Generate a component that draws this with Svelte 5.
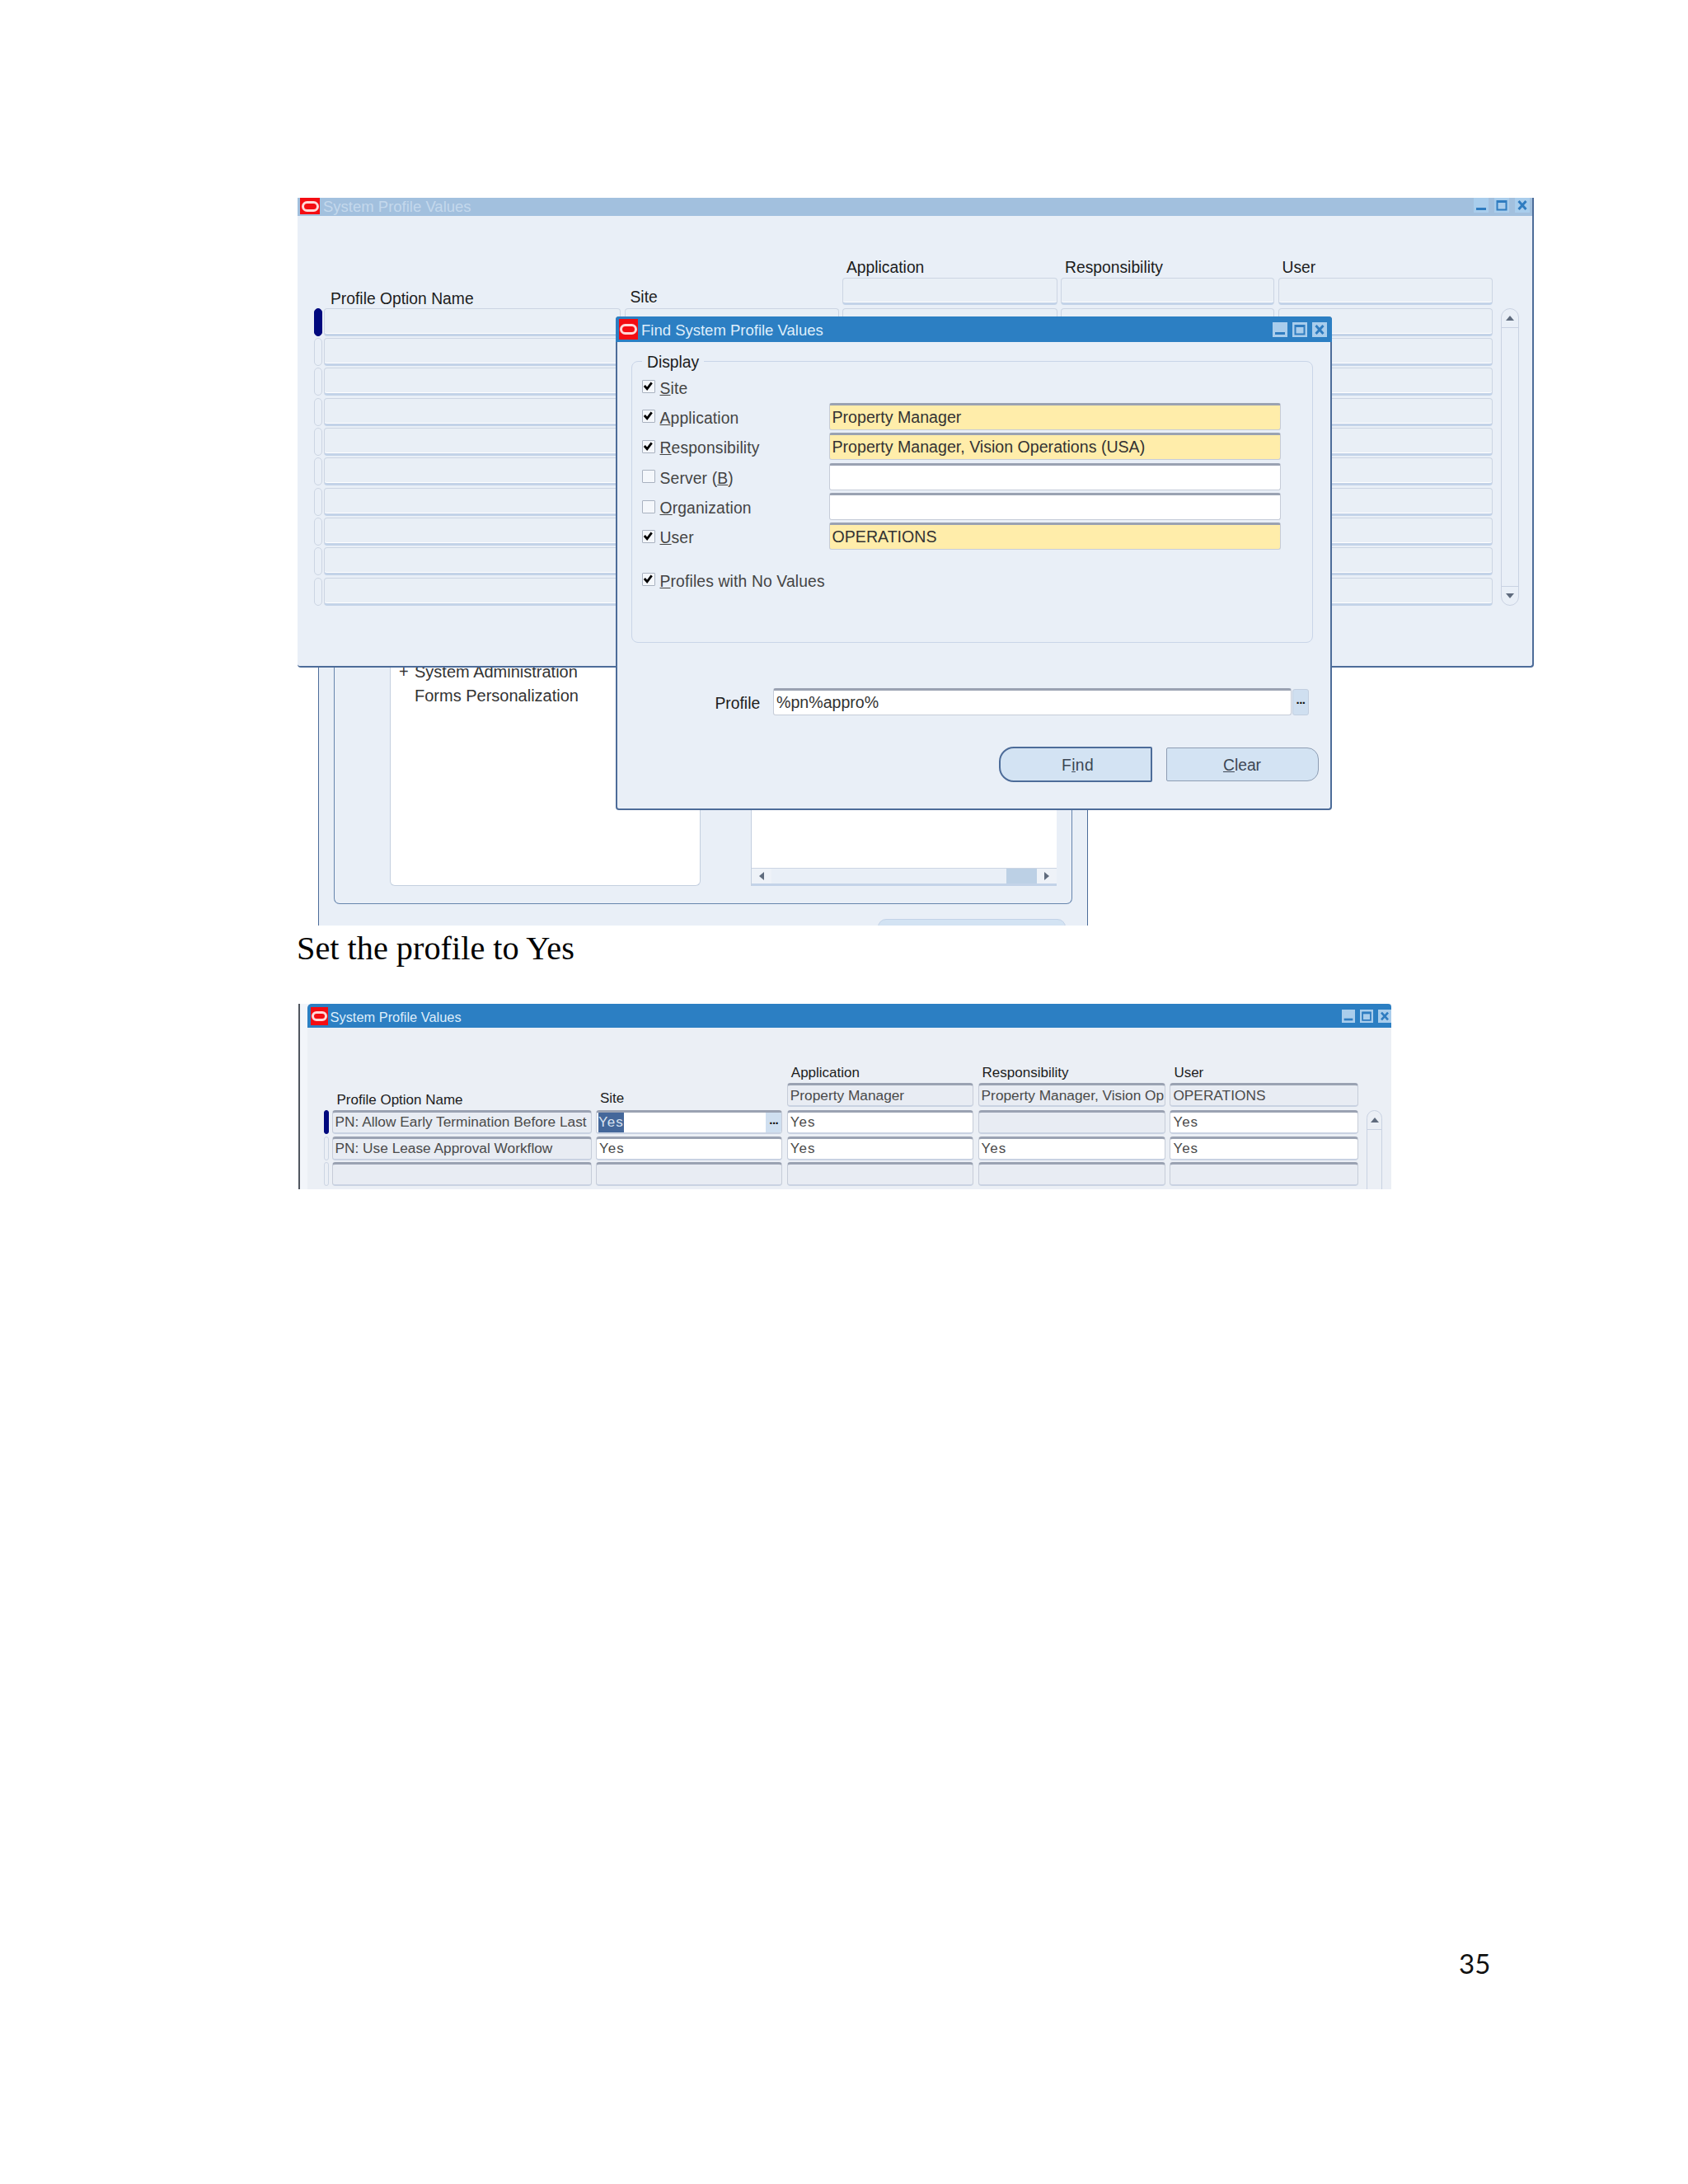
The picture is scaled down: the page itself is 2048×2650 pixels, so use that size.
<script>
    // rows of the empty table behind the find dialog
    const blankRows = Array.from({ length: 10 }, (_, i) => i);

    const findRows = [
        { key: "site", pre: "", mn: "S", post: "ite", checked: true },
        { key: "app", pre: "", mn: "A", post: "pplication", checked: true, value: "Property Manager", req: true },
        { key: "resp", pre: "", mn: "R", post: "esponsibility", checked: true, value: "Property Manager, Vision Operations (USA)", req: true },
        { key: "server", pre: "Server (", mn: "B", post: ")", checked: false, value: "" },
        { key: "org", pre: "", mn: "O", post: "rganization", checked: false, value: "" },
        { key: "user", pre: "", mn: "U", post: "ser", checked: true, value: "OPERATIONS", req: true },
    ];

    const results = [
        { name: "PN: Allow Early Termination Before Last", site: "Yes", app: "Yes", resp: "", user: "Yes", current: true },
        { name: "PN: Use Lease Approval Workflow", site: "Yes", app: "Yes", resp: "Yes", user: "Yes" },
        { name: "", site: "", app: "", resp: "", user: "" },
    ];
</script>

{#snippet winButtons()}
    <div class="winbtns">
        <svg viewBox="0 0 18 18"><rect width="18" height="18" fill="#a9cdec" /><rect x="3" y="12" width="12" height="3" fill="#2f7cc0" /></svg>
        <svg viewBox="0 0 18 18"><rect width="18" height="18" fill="#a9cdec" /><rect x="3.5" y="4" width="11" height="10.5" fill="none" stroke="#2f7cc0" stroke-width="2" /><rect x="3" y="3" width="12" height="3" fill="#2f7cc0" /></svg>
        <svg viewBox="0 0 18 18"><rect width="18" height="18" fill="#a9cdec" /><path d="M4.5 4 L13.5 14 M13.5 4 L4.5 14" stroke="#2f7cc0" stroke-width="3" /></svg>
    </div>
{/snippet}

{#snippet check(on)}
    <span class="box">
        {#if on}
            <svg viewBox="0 0 14 14"><path d="M2 6.5 L5.5 10.5 L11.5 2.5" fill="none" stroke="#000" stroke-width="3" /></svg>
        {/if}
    </span>
{/snippet}

{#snippet scrollbar()}
    <div class="scroll">
        <div class="cap up"><i class="tri-up"></i></div>
        <div class="cap down"><i class="tri-down"></i></div>
    </div>
{/snippet}

<div class="page">
    <div class="figure">
        <!-- navigator form, mostly hidden under the other two windows -->
        <div class="behind">
            <div class="frame">
                <div class="tree">
                    <div class="tree-row top"><span class="plus">+</span>System Administration</div>
                    <div class="tree-row">Forms Personalization</div>
                </div>
                <div class="list">
                    <div class="hbar">
                        <div class="harrow"><i class="tri-left"></i></div>
                        <div class="htrack"></div>
                        <div class="hthumb"></div>
                        <div class="harrow"><i class="tri-right"></i></div>
                    </div>
                </div>
            </div>
            <div class="btn-peek"></div>
        </div>

        <!-- inactive window -->
        <div class="window main">
            <div class="title pale">
                <span class="logo small"></span>
                <span class="title-text">System Profile Values</span>
                {@render winButtons()}
            </div>
            <div class="tbl big">
                <div class="lab c-app">Application</div>
                <div class="lab c-resp">Responsibility</div>
                <div class="lab c-user">User</div>

                <div class="lab low c-name">Profile Option Name</div>
                <div class="lab low site-lab c-site">Site</div>
                <div class="fld ctx c-app"></div>
                <div class="fld ctx c-resp"></div>
                <div class="fld ctx c-user"></div>

                {#each blankRows as i}
                    <div class="ind c-ind" class:on={i === 0} style="grid-row: {i + 3}"></div>
                    <div class="fld c-name" style="grid-row: {i + 3}"></div>
                    <div class="fld c-site" style="grid-row: {i + 3}"></div>
                    <div class="fld c-app" style="grid-row: {i + 3}"></div>
                    <div class="fld c-resp" style="grid-row: {i + 3}"></div>
                    <div class="fld c-user" style="grid-row: {i + 3}"></div>
                {/each}
                <div class="c-scroll">{@render scrollbar()}</div>
            </div>
        </div>

        <!-- find dialog -->
        <div class="dialog">
            <div class="title blue">
                <span class="logo"></span>
                <span class="title-text">Find System Profile Values</span>
                {@render winButtons()}
            </div>
            <div class="dialog-body">
                <fieldset>
                    <legend>Display</legend>
                    <div class="find-grid">
                        {#each findRows as r}
                            {@render check(r.checked)}
                            <span class="chk-label">{r.pre}<u>{r.mn}</u>{r.post}</span>
                            {#if r.value !== undefined}
                                <div class="input" class:req={r.req}>{r.value}</div>
                            {:else}
                                <span></span>
                            {/if}
                        {/each}
                    </div>
                    <div class="novalues">
                        {@render check(true)}
                        <span class="chk-label"><u>P</u>rofiles with No Values</span>
                    </div>
                </fieldset>

                <div class="profile">
                    <span class="profile-label">Profile</span>
                    <div class="input profile-input">%pn%appro%</div>
                    <div class="lov"><b>...</b></div>
                </div>

                <div class="actions">
                    <button class="find">F<u>i</u>nd</button>
                    <button class="clear"><u>C</u>lear</button>
                </div>
            </div>
        </div>
    </div>

    <p class="caption">Set the profile to Yes</p>

    <div class="shot2">
        <div class="window second">
            <div class="title blue thin">
                <span class="logo tiny"></span>
                <span class="title-text">System Profile Values</span>
                {@render winButtons()}
            </div>
            <div class="tbl tight">
                <div class="lab c-app">Application</div>
                <div class="lab c-resp">Responsibility</div>
                <div class="lab c-user">User</div>

                <div class="lab low c-name">Profile Option Name</div>
                <div class="lab low site-lab c-site">Site</div>
                <div class="fld ctx ro c-app">Property Manager</div>
                <div class="fld ctx ro c-resp">Property Manager, Vision Op</div>
                <div class="fld ctx ro c-user">OPERATIONS</div>

                {#each results as r, i}
                    <div class="ind c-ind" class:on={r.current} style="grid-row: {i + 3}"></div>
                    <div class="fld ro c-name" style="grid-row: {i + 3}">{r.name}</div>
                    {#if r.current}
                        <div class="fld wh spaced c-site site-cell" style="grid-row: {i + 3}">
                            <span class="sel">{r.site}</span>
                            <div class="lov"><b>...</b></div>
                        </div>
                    {:else}
                        <div class="fld spaced c-site" class:wh={r.site} class:ro={!r.site} style="grid-row: {i + 3}">{r.site}</div>
                    {/if}
                    <div class="fld spaced c-app" class:wh={r.app} class:ro={!r.app} style="grid-row: {i + 3}">{r.app}</div>
                    <div class="fld spaced c-resp" class:wh={r.resp} class:ro={!r.resp} style="grid-row: {i + 3}">{r.resp}</div>
                    <div class="fld spaced c-user" class:wh={r.user} class:ro={!r.user} style="grid-row: {i + 3}">{r.user}</div>
                {/each}
                <div class="c-scroll">{@render scrollbar()}</div>
            </div>
        </div>
    </div>

    <div class="pageno">35</div>
</div>

<style>
    :global(body) {
        margin: 0;
        background: #fff;
    }

    .page {
        width: 2048px;
        min-height: 2650px;
        box-sizing: border-box;
        padding: 240px 0 0 361px;
        font-family: "Liberation Sans", Arial, sans-serif;
        font-size: 19.3px;
        color: #222;
    }

    .figure {
        position: relative;
        height: 883px;
        width: 1500px;
    }

    /* ---- window chrome ---- */
    .window {
        box-sizing: border-box;
        background: #e9eff7;
    }

    .window.main {
        position: relative;
        z-index: 1;
        height: 570px;
        border-right: 2px solid #4d6c99;
        border-bottom: 2px solid #4d6c99;
        border-radius: 0 0 4px 4px;
    }

    .title {
        display: flex;
        align-items: center;
        color: #dfeefb;
    }

    .title.pale {
        height: 22px;
        background: #a2c0de;
        align-items: flex-start;
        color: #c4d8ec;
    }

    .title.pale .title-text {
        font-size: 18.5px;
        line-height: 17px;
        margin-left: 4px;
    }

    .title.pale .winbtns {
        margin-right: 3px;
        gap: 7px;
    }

    .title.blue {
        height: 31px;
        background: #2c7fc3;
        border-radius: 4px 4px 0 0;
    }

    .title.thin {
        height: 29px;
    }

    .title-text {
        font-size: 18.5px;
        margin-left: 4px;
        padding-top: 2px;
    }

    .title.thin .title-text {
        font-size: 16.4px;
        margin-left: 3px;
        padding-top: 3px;
    }

    .logo {
        flex: none;
        width: 23px;
        height: 25px;
        margin-left: 4px;
        background: #f40c12;
        display: flex;
        align-items: center;
        justify-content: center;
    }

    .logo::after {
        content: "";
        width: 15px;
        height: 7px;
        border: 3px solid #ffd9d9;
        border-radius: 7px;
    }

    .logo.small {
        width: 24px;
        height: 20px;
        margin-left: 3px;
    }

    .logo.tiny {
        width: 21px;
        height: 22px;
    }

    .logo.tiny::after {
        width: 13px;
        height: 6px;
    }

    .winbtns {
        margin-left: auto;
        margin-right: 6px;
        display: flex;
        gap: 6px;
    }

    .winbtns svg {
        display: block;
        width: 18px;
        height: 18px;
    }

    .title.thin .winbtns {
        margin-right: 0;
    }

    .title.thin .winbtns svg {
        width: 16px;
        height: 16px;
    }

    /* ---- tables ---- */
    .tbl {
        display: grid;
    }

    .tbl.big {
        margin: 50px 0 0 20px;
        width: 1461px;
        grid-template-columns: 7.5px 360px 260px 260.5px 259px 260px 28px;
        column-gap: 4.5px;
        grid-template-rows: 23px 34.3px;
        grid-auto-rows: 34px;
        row-gap: 2.3px;
    }

    .tbl.tight {
        margin: 44.5px 0 0 20px;
        width: 1283px;
        grid-template-columns: 4.5px 315px 226.3px 226.3px 227.3px 228.3px 24px;
        column-gap: 5.5px;
        grid-template-rows: 20.3px 29.8px;
        grid-auto-rows: 29px;
        row-gap: 2.7px;
        font-size: 17px;
    }

    .c-ind { grid-column: 1; }
    .c-name { grid-column: 2; }
    .c-site { grid-column: 3; }
    .c-app { grid-column: 4; }
    .c-resp { grid-column: 5; }
    .c-user { grid-column: 6; }

    .c-scroll {
        grid-column: 7;
        grid-row: 3 / span 10;
        margin-left: 6px;
    }

    .tbl.tight .c-scroll {
        height: 240px;
        grid-row: 3 / span 3;
        margin-left: 5px;
    }

    .lab {
        grid-row: 1;
        align-self: end;
        line-height: 20px;
        color: #1c1c1c;
        padding-left: 5px;
    }

    .low {
        grid-row: 2;
        padding-left: 8px;
        margin-bottom: -1px;
    }

    .tight .low {
        padding-left: 6px;
    }

    .site-lab {
        padding-left: 7px;
        padding-bottom: 2px;
    }

    .tight .site-lab {
        padding-left: 5px;
    }

    .fld {
        box-sizing: border-box;
        min-width: 0;
        white-space: nowrap;
        overflow: hidden;
        background: #e9eff6;
        border: 1.5px solid #ccd5e3;
        border-bottom: 3px solid #c3d3e8;
        border-radius: 4px;
        box-shadow: inset 0 -1px 0 #fff;
    }

    .fld.ctx {
        grid-row: 2;
        height: 33px;
    }

    .tight .fld {
        display: flex;
        align-items: center;
        padding-left: 3px;
        border: 1.5px solid #c6ccd8;
        border-top: 3px solid #9aa2b2;
        border-bottom: 2.5px solid #c9d2e2;
        color: #4a4a4a;
        box-shadow: none;
        font-size: 17.3px;
    }

    .tight .fld.ctx {
        height: 29px;
    }

    .tight .fld.ro {
        background: #e8ecf3;
    }

    .tight .fld.wh {
        background: #fff;
    }

    .tight .spaced {
        letter-spacing: 1px;
        font-size: 17px;
    }

    .site-cell {
        padding-right: 0;
        justify-content: space-between;
        border-right: none;
    }

    .sel {
        background: #44679a;
        color: #d8e2f0;
        margin-left: -1px;
        line-height: 24px;
    }

    .ind {
        box-sizing: border-box;
        width: 10px;
        border: 1.5px solid #ccd5e3;
        border-radius: 5px;
    }

    .tight .ind {
        width: 6px;
    }

    .ind.on {
        background: #00097e;
        border-color: #00097e;
    }

    .scroll {
        height: 100%;
        box-sizing: border-box;
        display: flex;
        flex-direction: column;
        justify-content: space-between;
        border: 1.5px solid #c9d2e2;
        border-radius: 11px;
    }

    .cap {
        height: 22px;
        display: flex;
        align-items: center;
        justify-content: center;
    }

    .cap.up {
        border-bottom: 1.5px solid #c9d2e2;
    }

    .cap.down {
        border-top: 1.5px solid #c9d2e2;
    }

    .tri-up, .tri-down, .tri-left, .tri-right {
        display: block;
        width: 0;
        height: 0;
        border: 5px solid transparent;
    }

    .tri-up {
        border-top: none;
        border-bottom: 6px solid #5f6b7d;
    }

    .tri-down {
        border-bottom: none;
        border-top: 6px solid #5f6b7d;
    }

    .tri-left {
        border-left: none;
        border-right: 6px solid #5f6b7d;
    }

    .tri-right {
        border-right: none;
        border-left: 6px solid #5f6b7d;
    }

    /* ---- form under the main window ---- */
    .behind {
        position: absolute;
        left: 25px;
        top: 520px;
        width: 934px;
        height: 363px;
        box-sizing: border-box;
        background: #e9eff7;
        border-left: 1.5px solid #4d6c99;
        border-right: 1.5px solid #4d6c99;
        overflow: hidden;
    }

    .frame {
        position: relative;
        margin: 0 0 0 18px;
        width: 896px;
        height: 337px;
        box-sizing: border-box;
        display: flex;
        padding: 0 0 21px 67px;
        border: 1.5px solid #6685ad;
        border-top: none;
        border-radius: 0 0 7px 7px;
    }

    .tree {
        width: 377px;
        box-sizing: border-box;
        background: #fff;
        border: 1.5px solid #c4cfdf;
        border-top: none;
        border-radius: 0 0 6px 6px;
        padding: 41px 0 0 29px;
        color: #333;
        font-size: 20px;
    }

    .tree-row {
        line-height: 29px;
        height: 29px;
    }

    .plus {
        position: absolute;
        margin-left: -19px;
    }

    .list {
        margin-left: 61px;
        width: 371px;
        box-sizing: border-box;
        background: #fff;
        border-left: 1.5px solid #c4cfdf;
        display: flex;
        align-items: flex-end;
    }

    .hbar {
        width: 100%;
        height: 22px;
        box-sizing: border-box;
        display: flex;
        background: #e9eff7;
        border-top: 1.5px solid #ccd5e3;
        border-bottom: 3px solid #c3d3e8;
    }

    .harrow {
        width: 24px;
        display: flex;
        align-items: center;
        justify-content: center;
        background: #eef2f8;
    }

    .htrack {
        flex: 1;
    }

    .hthumb {
        width: 37px;
        background: #bcd0e5;
    }

    .btn-peek {
        position: relative;
        margin: 18px 0 0 678px;
        width: 226px;
        height: 20px;
        background: #d3e3f3;
        border: 1.5px solid #c3d3e8;
        border-radius: 10px 10px 0 0;
    }

    /* ---- find dialog ---- */
    .dialog {
        position: absolute;
        z-index: 2;
        left: 386px;
        top: 144px;
        width: 869px;
        height: 599px;
        box-sizing: border-box;
        background: #e9eff7;
        border: 2px solid #4d6c99;
        border-top: none;
        border-radius: 4px;
    }

    .dialog .title {
        margin: 0 -2px;
    }

    .dialog-body {
        padding: 11px 21px 0 16.5px;
    }

    fieldset {
        margin: 0;
        padding: 0 12.5px 0 12.5px;
        height: 354px;
        box-sizing: border-box;
        border: 1.5px solid #c9d5e8;
        border-radius: 8px;
    }

    legend {
        padding: 4px 6px 0;
        line-height: 20px;
        color: #1c1c1c;
    }

    .find-grid {
        margin-top: 2px;
        display: grid;
        grid-template-columns: 16px 199.5px 548.5px;
        column-gap: 5.5px;
        grid-auto-rows: 34px;
        row-gap: 2.4px;
        align-items: center;
    }

    .find-grid .chk-label {
        margin-top: 5px;
    }

    .box {
        box-sizing: border-box;
        display: block;
        width: 16px;
        height: 16px;
        background: #f4f7fb;
        border: 1.5px solid #a9b2c0;
        border-radius: 1px;
    }

    .box svg {
        display: block;
        width: 13px;
        height: 13px;
    }

    .chk-label {
        color: #444;
        letter-spacing: 0.15px;
        white-space: nowrap;
    }

    .input {
        box-sizing: border-box;
        height: 33px;
        line-height: 28px;
        padding-left: 3px;
        background: #fff;
        border: 1.5px solid #c6ccd8;
        border-top: 3px solid #9aa2b2;
        border-radius: 3px;
        color: #333;
        font-size: 19.6px;
    }

    .input.req {
        background: #ffedaa;
    }

    .novalues {
        margin-top: 22px;
        display: flex;
        gap: 5.5px;
        align-items: center;
    }

    .novalues .chk-label {
        margin-top: 5px;
    }

    .profile {
        margin-top: 55px;
        display: flex;
        align-items: center;
    }

    .profile-label {
        margin-left: 102px;
        width: 70.5px;
        padding-top: 4px;
        color: #1c1c1c;
    }

    .profile-input {
        width: 629px;
    }

    .lov {
        flex: none;
        box-sizing: border-box;
        width: 20px;
        height: 32px;
        margin-left: 1px;
        background: #cfdff0;
        border: 1.5px solid #c3cfe0;
        border-radius: 3px;
        display: flex;
        align-items: center;
        justify-content: center;
    }

    .lov b {
        font-size: 15px;
        line-height: 6px;
        height: 12px;
        letter-spacing: -0.5px;
        color: #111;
    }

    .site-cell .lov {
        width: 19px;
        height: 24px;
        margin: 0;
        border: none;
        border-radius: 0;
    }

    .actions {
        margin-top: 38px;
        display: flex;
        align-items: center;
        justify-content: flex-end;
        gap: 17px;
        margin-right: -6.5px;
    }

    button {
        box-sizing: border-box;
        font: inherit;
        color: #3c4654;
        background: #d3e3f3;
        padding: 3px 0 0;
    }

    .find {
        width: 186px;
        height: 43px;
        padding-left: 6px;
        letter-spacing: 0.4px;
        border: 2.5px solid #4d6c99;
        border-radius: 18px 2px 2px 18px;
    }

    .clear {
        width: 185px;
        height: 41px;
        border: 1.5px solid #8d9db3;
        border-radius: 2px 14px 14px 2px;
    }

    /* ---- text below ---- */
    .caption {
        margin: 0 0 0 -1px;
        padding-top: 5px;
        height: 95px;
        box-sizing: border-box;
        font-family: "Liberation Serif", "Times New Roman", serif;
        font-size: 40.3px;
        line-height: 46px;
        color: #000;
    }

    .shot2 {
        width: 1326px;
        margin-left: 1px;
        height: 225px;
        overflow: hidden;
        box-sizing: border-box;
        background: #f2f5fa;
        border-left: 2.5px solid #50565f;
        padding-left: 8.5px;
    }

    .window.second {
        height: 225px;
        overflow: hidden;
        background: #ebeff5;
        border-radius: 5px 0 0 0;
    }

    .pageno {
        margin: 919px 0 0 1409px;
        font-family: Lato, "Open Sans", sans-serif;
        font-size: 33px;
        line-height: 40px;
        color: #111;
    }
</style>
